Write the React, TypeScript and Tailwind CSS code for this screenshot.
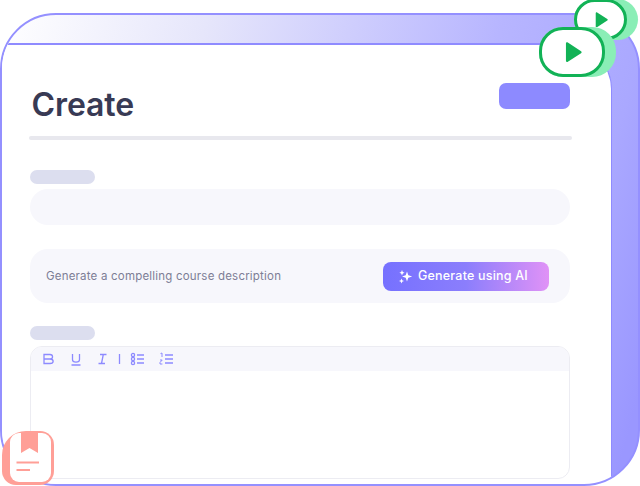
import React from "react";

function PlayBadge({ className, size, inset }: { className: string; size: number; inset: string }) {
  return (
    <div className={`absolute ${className} rounded-[24px] bg-[#8aeeb6]`}>
      <div className={`flex h-full w-[calc(100%-11px)] items-center justify-center rounded-[24px] border-[3px] border-[#12b256] bg-white ${inset}`}>
        <svg width={size} height={size * 1.2} viewBox="0 0 18 20" preserveAspectRatio="none">
          <path d="M1 1.5 C1 .5 2 0 3 .6 L17 9 C17.8 9.5 17.8 10.5 17 11 L3 19.4 C2 20 1 19.5 1 18.5 Z" fill="#12b256" />
        </svg>
      </div>
    </div>
  );
}

function SkeletonLabel() {
  return <div className="h-[14px] w-[65px] rounded-full bg-[#dcdeef]" />;
}

export default function App() {
  return (
    <div className="relative h-[486px] w-[640px] overflow-hidden bg-white font-['Inter',sans-serif]">
      <div className="mt-[13px] h-[473px] w-[640px] overflow-hidden rounded-[56px] border-2 border-[#9490ff] bg-[linear-gradient(105deg,#ffffff_0%,#e6e6fb_27%,#b7b5ff_66%,#aaa8ff_85%,#9a97ff_97%)]">
        <div className="mt-[28px] mr-[26px] h-[445px] rounded-tr-[46px] border-t-2 border-r border-[#8f8bff] bg-white px-[28px] pt-[37px]">
          <div className="flex w-[540px] items-start justify-between">
            <h1 className="pl-[1.5px] text-[32px] leading-[46px] font-semibold tracking-[-0.1px] text-[#383a54]">Create</h1>
            <div className="mt-[1px] h-[26px] w-[71px] rounded-[7px] bg-[#8d8aff]" />
          </div>
          <div className="mt-[8px] h-[4px] w-[543px] -translate-x-px rounded-full bg-[#e8e8ee]" />

          <div className="mt-[30px]">
            <SkeletonLabel />
          </div>
          <div className="mt-[5px] h-[36px] w-[540px] rounded-[18px] bg-[#f7f7fc]" />

          <div className="mt-[24px] flex h-[54px] w-[540px] items-center justify-between rounded-[18px] bg-[#f7f7fc] pr-[21px] pl-[16px]">
            <span className="pt-[2px] text-[11.5px] tracking-[0.2px] text-[#7d7e96]">Generate a compelling course description</span>
            <div className="flex h-[29px] w-[166px] items-center gap-[5px] rounded-[8px] bg-[linear-gradient(90deg,#7671ff_0%,#8b7efc_50%,#e092f6_100%)] pl-[15px] text-[12.5px] font-medium tracking-[0.2px] text-white">
              <svg width="15" height="15" viewBox="0 0 15 15" fill="white">
                <path d="M9 2.5 L10.3 6.2 L14.2 7.5 L10.3 8.8 L9 12.5 L7.7 8.8 L4 7.5 L7.7 6.2 Z" />
                <path d="M4 1 L4.8 3 L6.6 3.7 L4.8 4.4 L4 6.4 L3.2 4.4 L1.4 3.7 L3.2 3 Z" />
                <path d="M3.5 9.5 L4.2 11.3 L6 12 L4.2 12.7 L3.5 14.5 L2.8 12.7 L1 12 L2.8 11.3 Z" />
              </svg>
              <span>Generate using AI</span>
            </div>
          </div>

          <div className="mt-[23px]">
            <SkeletonLabel />
          </div>
          <div className="mt-[6px] h-[133px] w-[540px] overflow-hidden rounded-[12px] border border-[#ececf2]">
            <div className="flex h-[24px] items-center bg-[#f7f7fc] pl-[12px] text-[#8d8aff]">
              <svg width="130" height="14" viewBox="0 0 130 14" fill="none" stroke="currentColor" strokeWidth="1.3">
                <path d="M1 2.5 H7 C10.4 2.5 10.4 7 7 7 C11.2 7 11.2 11.5 7 11.5 H1 Z M1 7 H7" />
                <path d="M29.5 2 V7.5 C29.5 11 36.5 11 36.5 7.5 V2 M28.5 13 H37.5" />
                <path d="M57 2.5 H63.5 M60.3 2.5 L58.5 11.5 M55.5 11.5 H62" />
                <path d="M76.5 2 V12" />
                <circle cx="90" cy="3" r="1.6" />
                <circle cx="90" cy="7" r="1.6" />
                <circle cx="90" cy="11" r="1.6" />
                <path d="M94 3 H101 M94 7 H101 M94 11 H101" />
                <path d="M122 3 H130 M122 7 H130 M122 11 H130" />
                <path d="M117.5 1.6 L119 1 V5 M117 8 H119.2 L117 10.5 V12 H119.4" strokeWidth="1" />
              </svg>
            </div>
          </div>
        </div>
      </div>

      <PlayBadge className="top-[-1px] left-[574px] h-[41px] w-[64px]" size={13} inset="pl-[1px]" />
      <PlayBadge className="top-[27px] left-[539px] h-[50px] w-[77px]" size={17} inset="pl-[3px]" />

      <div className="absolute top-[431px] left-[2px] h-[54px] w-[52px] rounded-[14px] rounded-tl-[24px] bg-[#ff9f97]">
        <div className="mt-[2px] ml-[8px] h-[49px] w-[41px] rounded-[9px] bg-white">
          <svg width="41" height="49" viewBox="0 0 41 49">
            <path d="M11 0 H28 V20 L19.5 15 L11 20 Z" fill="#ff9f97" />
            <path d="M6.5 29.5 H29 M6.5 37 H20" stroke="#ff9f97" strokeWidth="2" />
          </svg>
        </div>
      </div>
    </div>
  );
}
